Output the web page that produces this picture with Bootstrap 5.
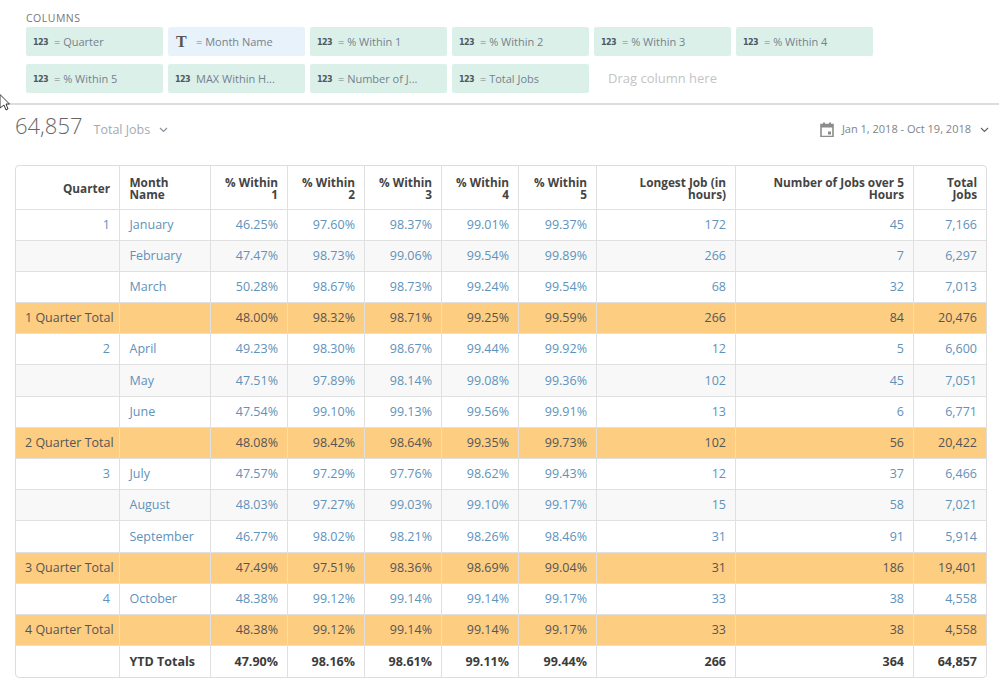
<!DOCTYPE html>
<html lang="en">
  <head>
    <meta charset="UTF-8" />
    <meta name="viewport" content="width=device-width, initial-scale=1.0" />
    <title>Quarter Report</title>
    <link href="https://cdn.jsdelivr.net/npm/bootstrap@5.3.0/dist/css/bootstrap.min.css" rel="stylesheet" />
    <style>
      body { font-family: "Open Sans", "Liberation Sans", sans-serif; font-size: 12.5px; color: #555; background: #fff; position: relative; overflow: hidden; }
      .builder { padding: 11px 26px 0; height: 105px; border-bottom: 2px solid #ddd; }
      .builder-label { font-size: 10.5px; line-height: 14px; letter-spacing: .5px; color: #777; margin-bottom: 2px; }
      .chips { width: 860px; column-gap: 5.5px; row-gap: 8px; }
      .chip { width: 136.5px; height: 29px; background: #dcf0ea; border-radius: 2px; padding-left: 7px; padding-top: 1px; font-size: 11px; color: #74828a; white-space: nowrap; }
      .chip-text { background: #e8f2fb; }
      .chip-empty { background: none; color: #c4c4c4; font-size: 13px; padding-left: 14px; }
      .chip-ico { width: 21px; flex: none; font-family: "DejaVu Sans", sans-serif; font-size: 8px; font-weight: 700; color: #4d5a60; letter-spacing: -.6px; padding-top: 1px; }
      .chip-ico-t { font-family: "Liberation Serif", serif; font-size: 16px; letter-spacing: 0; color: #555; padding-left: 1px; padding-top: 0; line-height: 1; }
      .summary { padding: 0 10px 20px 15px; height: 60px; }
      .big-num { font-size: 22px; font-weight: 300; color: #666; line-height: 1; }
      .big-label { font-size: 12.5px; color: #a3abb2; margin-left: 11px; padding-top: 10px; }
      .chev { margin-left: 9px; }
      .chev-low { margin-top: 10px; }
      .date-range { font-size: 11px; color: #7d858b; padding-top: 9px; }
      .date-range svg.cal { margin-right: 8px; }
      .tbl-wrap { margin: 0 12px 0 15px; border: 1px solid #ddd; border-radius: 4px; overflow: hidden; }
      .report { table-layout: fixed; width: 100%; margin: 0; border-collapse: collapse; font-size: 12.5px; }
      .report th, .report td { border: 0 solid #e0e0e0; border-right-width: 1px; border-bottom-width: 1px; padding: 1px 9px 0; text-align: right; vertical-align: middle; white-space: nowrap; box-shadow: none; background: transparent; }
      .report th:last-child, .report td:last-child { border-right-width: 0; }
      .report tr:last-child td { border-bottom-width: 0; }
      .report thead th { height: 43px; font-size: 11.8px; line-height: 12px; font-weight: 700; color: #444; white-space: normal; }
      .report tbody td { height: 31.2px; color: #6092ba; }
      .report .lft { text-align: left; padding-left: 9.5px; }
      .report .striped td { background: #f8f8f8; }
      .report .qtotal td { background: #fdcd82; color: #555; }
      .report .ytd td { font-weight: 700; color: #3c3c3c; }
      .w1 { width: 103.5px; } .w2 { width: 91px; } .w3 { width: 77px; } .w3b { width: 78px; } .w4 { width: 139px; } .w5 { width: 178px; } .w6 { width: 72.5px; }
      .pointer { position: absolute; left: 0; top: 94px; }
    </style>
  </head>
  <body>
    <svg class="pointer" width="11" height="20" viewBox="0 0 11 20"><path d="M0 .5 9.5 10H6l2 5-2 1-2-5-4 3z" fill="#fff" stroke="#222" stroke-width=".9" /></svg>

    <div class="builder">
      <div class="builder-label">COLUMNS</div>
      <div class="chips d-flex flex-wrap" id="chips"></div>
    </div>

    <div class="summary d-flex justify-content-between align-items-center">
      <div class="d-flex align-items-center">
        <span class="big-num">64,857</span>
        <span class="big-label">Total Jobs</span>
        <svg class="chev chev-low" width="9" height="6" viewBox="0 0 9 6"><path d="M1 1l3.5 3.5L8 1" fill="none" stroke="#8a9299" stroke-width="1.2" /></svg>
      </div>
      <div class="date-range d-flex align-items-center">
        <svg class="cal" width="14" height="15" viewBox="0 0 14 15"><path d="M1 2.5h12v12H1z" fill="none" stroke="#8c8c8c" stroke-width="1.6" /><path d="M1 2h12v3.5H1zM3 .5h2v2H3zM9 .5h2v2H9zM8 9.5h3v3H8z" fill="#8c8c8c" /></svg>
        <span>Jan 1, 2018 - Oct 19, 2018</span>
        <svg class="chev" width="9" height="6" viewBox="0 0 9 6"><path d="M1 1l3.5 3.5L8 1" fill="none" stroke="#666" stroke-width="1.2" /></svg>
      </div>
    </div>

    <div class="tbl-wrap">
      <table class="table report">
        <colgroup>
          <col class="w1" /><col class="w2" /><col class="w3" /><col class="w3" /><col class="w3" /><col class="w3" /><col class="w3b" /><col class="w4" /><col class="w5" /><col class="w6" />
        </colgroup>
        <thead>
          <tr>
            <th>Quarter</th><th class="lft">Month Name</th><th>% Within 1</th><th>% Within 2</th><th>% Within 3</th><th>% Within 4</th><th>% Within 5</th><th>Longest Job (in hours)</th><th>Number of Jobs over 5 Hours</th><th>Total Jobs</th>
          </tr>
        </thead>
        <tbody id="rows"></tbody>
      </table>
    </div>

    <script>
      const chips = [
        ["n", "= Quarter"], ["t", "= Month Name"], ["n", "= % Within 1"], ["n", "= % Within 2"], ["n", "= % Within 3"], ["n", "= % Within 4"],
        ["n", "= % Within 5"], ["n", "MAX Within H..."], ["n", "= Number of J..."], ["n", "= Total Jobs"]
      ];
      let chipHtml = "";
      chips.forEach(([kind, label]) => {
        const icon = kind === "t" ? '<span class="chip-ico chip-ico-t fw-bold">T</span>' : '<span class="chip-ico">123</span>';
        chipHtml += `<div class="chip d-flex align-items-center ${kind === "t" ? "chip-text" : ""}">${icon}<span>${label}</span></div>`;
      });
      chipHtml += '<div class="chip chip-empty d-flex align-items-center">Drag column here</div>';
      document.getElementById("chips").innerHTML = chipHtml;

      const data = [
        ["1", "January", "46.25%", "97.60%", "98.37%", "99.01%", "99.37%", "172", "45", "7,166"],
        ["", "February", "47.47%", "98.73%", "99.06%", "99.54%", "99.89%", "266", "7", "6,297"],
        ["", "March", "50.28%", "98.67%", "98.73%", "99.24%", "99.54%", "68", "32", "7,013"],
        ["1 Quarter Total", "", "48.00%", "98.32%", "98.71%", "99.25%", "99.59%", "266", "84", "20,476"],
        ["2", "April", "49.23%", "98.30%", "98.67%", "99.44%", "99.92%", "12", "5", "6,600"],
        ["", "May", "47.51%", "97.89%", "98.14%", "99.08%", "99.36%", "102", "45", "7,051"],
        ["", "June", "47.54%", "99.10%", "99.13%", "99.56%", "99.91%", "13", "6", "6,771"],
        ["2 Quarter Total", "", "48.08%", "98.42%", "98.64%", "99.35%", "99.73%", "102", "56", "20,422"],
        ["3", "July", "47.57%", "97.29%", "97.76%", "98.62%", "99.43%", "12", "37", "6,466"],
        ["", "August", "48.03%", "97.27%", "99.03%", "99.10%", "99.17%", "15", "58", "7,021"],
        ["", "September", "46.77%", "98.02%", "98.21%", "98.26%", "98.46%", "31", "91", "5,914"],
        ["3 Quarter Total", "", "47.49%", "97.51%", "98.36%", "98.69%", "99.04%", "31", "186", "19,401"],
        ["4", "October", "48.38%", "99.12%", "99.14%", "99.14%", "99.17%", "33", "38", "4,558"],
        ["4 Quarter Total", "", "48.38%", "99.12%", "99.14%", "99.14%", "99.17%", "33", "38", "4,558"],
        ["", "YTD Totals", "47.90%", "98.16%", "98.61%", "99.11%", "99.44%", "266", "364", "64,857"]
      ];
      let rowHtml = "";
      data.forEach((r) => {
        let cls = "";
        if (r[0].includes("Total")) cls = "qtotal";
        else if (r[1] === "YTD Totals") cls = "ytd";
        else if (r[0] === "") cls = r[1] === "March" || r[1] === "June" || r[1] === "September" ? "" : "striped";
        rowHtml += `<tr class="${cls}">` + r.map((v, i) => `<td class="${i === 1 ? "lft" : ""}">${v}</td>`).join("") + "</tr>";
      });
      document.getElementById("rows").innerHTML = rowHtml;
    </script>
    <script src="https://cdn.jsdelivr.net/npm/bootstrap@5.3.0/dist/js/bootstrap.bundle.min.js"></script>
  </body>
</html>
